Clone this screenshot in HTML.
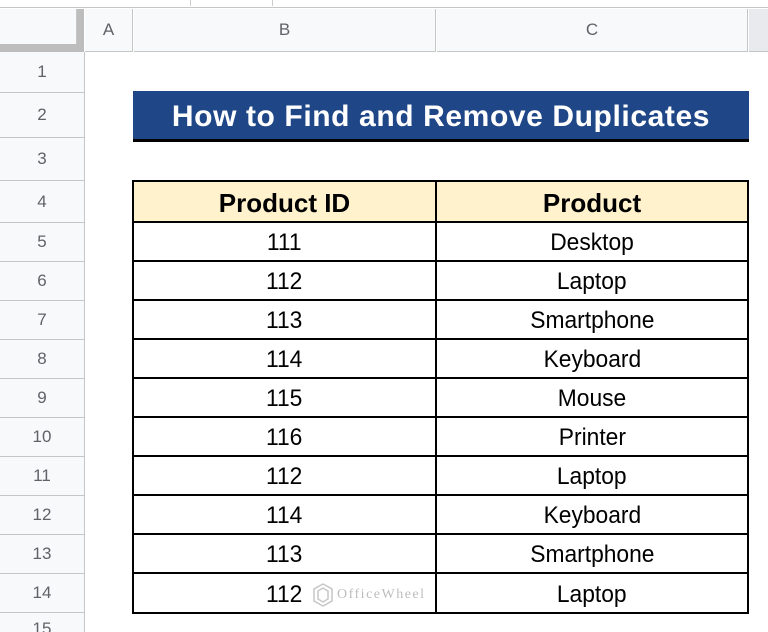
<!DOCTYPE html>
<html><head><style>
*{margin:0;padding:0;box-sizing:border-box}
html,body{width:768px;height:632px;overflow:hidden}
body{background:#fff;font-family:"Liberation Sans",Arial,sans-serif;position:relative}
.a{position:absolute}
.hdr{background:#f8f9fa;color:#5f6368;font-size:17px;display:flex;align-items:center;justify-content:center}
.rn{position:absolute;left:0;width:84px;background:#f8f9fa;color:#5f6368;font-size:17px;display:flex;align-items:center;justify-content:center;border-bottom:1px solid #c4c7c5}
.cell{position:absolute;display:flex;align-items:center;justify-content:center;font-size:24px;color:#000;border-right:2px solid #000;border-bottom:2px solid #000;padding-top:3px}
.cell span{display:inline-block;transform:scaleX(.95)}
</style></head><body>
<div class="a" style="left:0;top:0;width:768px;height:8px;border-bottom:1px solid #c4c7c5"></div>
<div class="a" style="left:190px;top:0;width:1px;height:6px;background:#ccc"></div>
<div class="a" style="left:272px;top:0;width:1px;height:6px;background:#ccc"></div>
<div class="a hdr" style="left:0;top:9px;width:77px;height:36px;border-right:1px solid #c4c7c5"></div>
<div class="a" style="left:0;top:44px;width:84px;height:8px;background:#bdbdbd"></div>
<div class="a" style="left:77px;top:9px;width:7px;height:43px;background:#bdbdbd"></div>
<div class="a hdr" style="left:85px;top:9px;width:48px;height:43px;border-right:1px solid #c4c7c5;border-bottom:1px solid #c4c7c5">A</div>
<div class="a hdr" style="left:134px;top:9px;width:302px;height:43px;border-right:1px solid #c4c7c5;border-bottom:1px solid #c4c7c5">B</div>
<div class="a hdr" style="left:437px;top:9px;width:311px;height:43px;border-right:1px solid #c4c7c5;border-bottom:1px solid #c4c7c5">C</div>
<div class="a" style="left:749px;top:9px;width:19px;height:43px;background:#e8eaed;border-bottom:1px solid #c4c7c5"></div>
<div class="a" style="left:84px;top:52px;width:1px;height:580px;background:#c4c7c5"></div>

<div class="rn" style="top:52px;height:41px">1</div>
<div class="rn" style="top:93px;height:45px">2</div>
<div class="rn" style="top:138px;height:43px">3</div>
<div class="rn" style="top:181px;height:42px">4</div>
<div class="rn" style="top:223px;height:39px">5</div>
<div class="rn" style="top:262px;height:39px">6</div>
<div class="rn" style="top:301px;height:39px">7</div>
<div class="rn" style="top:340px;height:39px">8</div>
<div class="rn" style="top:379px;height:39px">9</div>
<div class="rn" style="top:418px;height:39px">10</div>
<div class="rn" style="top:457px;height:39px">11</div>
<div class="rn" style="top:496px;height:39px">12</div>
<div class="rn" style="top:535px;height:39px">13</div>
<div class="rn" style="top:574px;height:39px">14</div>
<div class="rn" style="top:613px;height:19px;align-items:flex-start;padding-top:6px;border-bottom:none">15</div>

<div class="a" style="left:133px;top:91px;width:616px;height:51px;background:#1f4788;color:#fff;font-weight:bold;font-size:30px;display:flex;align-items:center;justify-content:center;border-bottom:3px solid #000;letter-spacing:0.6px;padding-top:4px">How to Find and Remove Duplicates</div>

<div class="a" style="left:132px;top:180px;width:617px;height:434px;border-left:2px solid #000;border-top:2px solid #000"></div>
<div class="cell" style="left:134px;top:182px;width:303px;height:41px;background:#fff2cc;font-weight:bold;font-size:26px">Product ID</div>
<div class="cell" style="left:437px;top:182px;width:312px;height:41px;background:#fff2cc;font-weight:bold;font-size:26px">Product</div>

<div class="cell" style="left:134px;top:223px;width:303px;height:39px"><span>111</span></div>
<div class="cell" style="left:437px;top:223px;width:312px;height:39px"><span>Desktop</span></div>
<div class="cell" style="left:134px;top:262px;width:303px;height:39px"><span>112</span></div>
<div class="cell" style="left:437px;top:262px;width:312px;height:39px"><span>Laptop</span></div>
<div class="cell" style="left:134px;top:301px;width:303px;height:39px"><span>113</span></div>
<div class="cell" style="left:437px;top:301px;width:312px;height:39px"><span>Smartphone</span></div>
<div class="cell" style="left:134px;top:340px;width:303px;height:39px"><span>114</span></div>
<div class="cell" style="left:437px;top:340px;width:312px;height:39px"><span>Keyboard</span></div>
<div class="cell" style="left:134px;top:379px;width:303px;height:39px"><span>115</span></div>
<div class="cell" style="left:437px;top:379px;width:312px;height:39px"><span>Mouse</span></div>
<div class="cell" style="left:134px;top:418px;width:303px;height:39px"><span>116</span></div>
<div class="cell" style="left:437px;top:418px;width:312px;height:39px"><span>Printer</span></div>
<div class="cell" style="left:134px;top:457px;width:303px;height:39px"><span>112</span></div>
<div class="cell" style="left:437px;top:457px;width:312px;height:39px"><span>Laptop</span></div>
<div class="cell" style="left:134px;top:496px;width:303px;height:39px"><span>114</span></div>
<div class="cell" style="left:437px;top:496px;width:312px;height:39px"><span>Keyboard</span></div>
<div class="cell" style="left:134px;top:535px;width:303px;height:39px"><span>113</span></div>
<div class="cell" style="left:437px;top:535px;width:312px;height:39px"><span>Smartphone</span></div>
<div class="cell" style="left:134px;top:574px;width:303px;height:40px"><span>112</span></div>
<div class="cell" style="left:437px;top:574px;width:312px;height:40px"><span>Laptop</span></div>

<div class="a" style="left:312px;top:582px;width:150px;height:26px;display:flex;align-items:center;opacity:.55">
<svg width="22" height="24" viewBox="0 0 22 24"><path d="M11 1 L20 6 L20 18 L11 23 L2 18 L2 6 Z" fill="none" stroke="#999" stroke-width="1.5"/><path d="M11 5 L16 8 L16 16 L11 19 L6 16 L6 8 Z" fill="none" stroke="#999" stroke-width="1.5"/></svg>
<span style="font-family:'Liberation Serif',serif;font-size:14px;color:#888;letter-spacing:1.5px;margin-left:3px">OfficeWheel</span></div>
</body></html>
